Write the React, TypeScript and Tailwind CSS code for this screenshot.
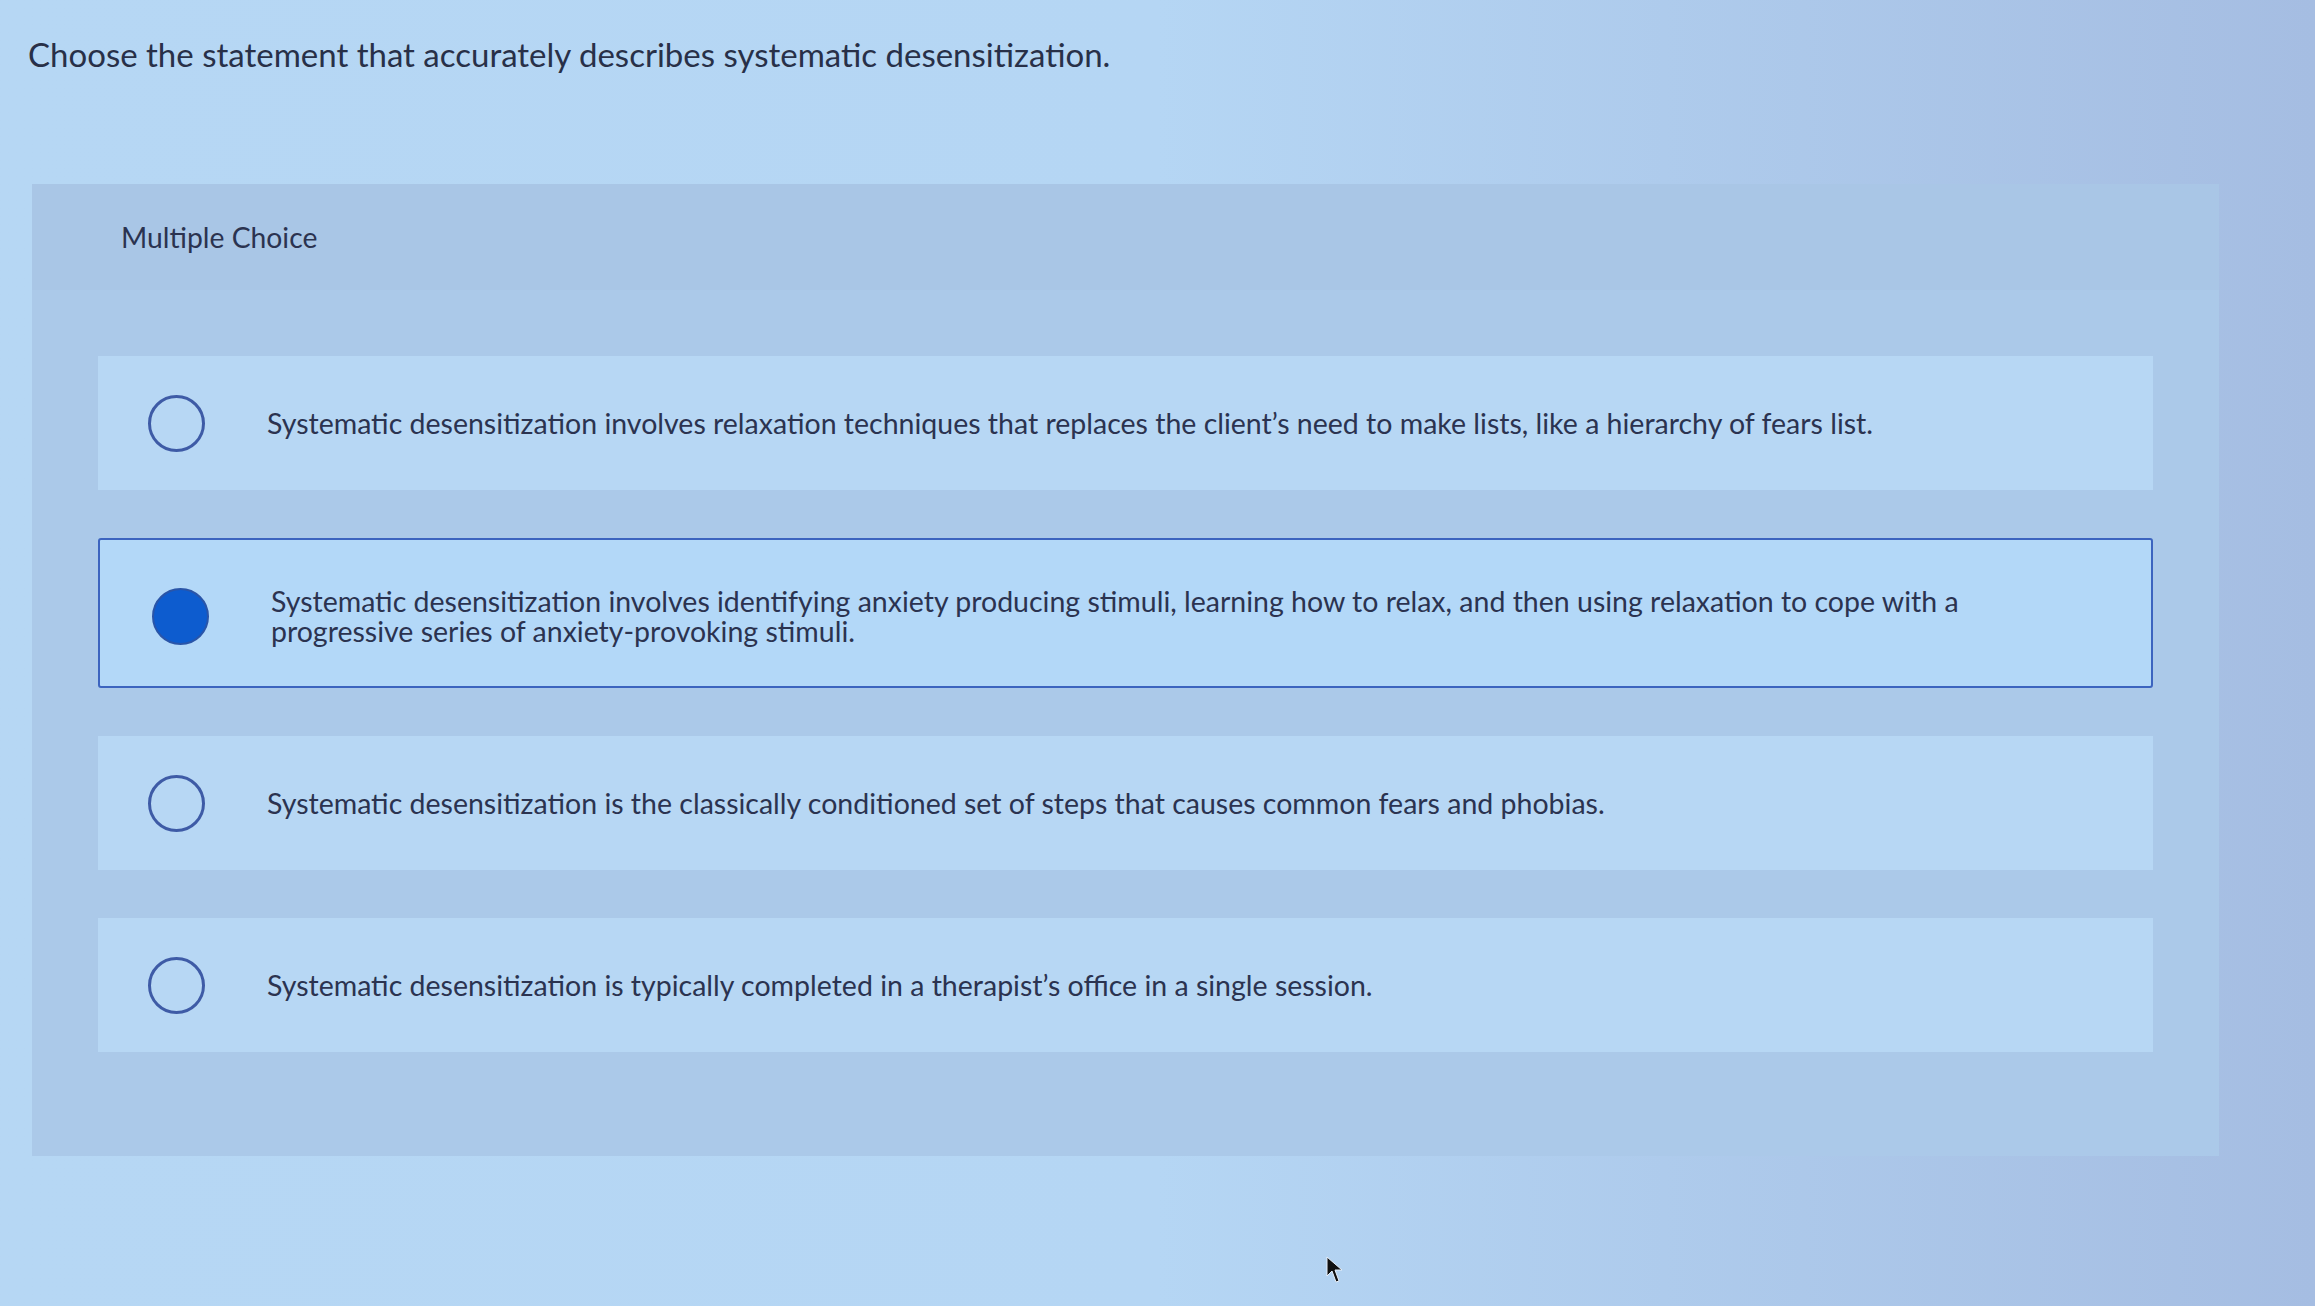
import React from "react";

type Choice = {
    text: string;
    selected?: boolean;
};

const choices: Choice[] = [
    {
        text: "Systematic desensitization involves relaxation techniques that replaces the client’s need to make lists, like a hierarchy of fears list.",
    },
    {
        text: "Systematic desensitization involves identifying anxiety producing stimuli, learning how to relax, and then using relaxation to cope with a progressive series of anxiety-provoking stimuli.",
        selected: true,
    },
    {
        text: "Systematic desensitization is the classically conditioned set of steps that causes common fears and phobias.",
    },
    {
        text: "Systematic desensitization is typically completed in a therapist’s office in a single session.",
    },
];

const Radio = ({ selected }: { selected?: boolean }) =>
    selected ? (
        <span className="block w-[57px] h-[57px] shrink-0 rounded-full bg-[#0d5ccf] border-2 border-[#2a55a8]" />
    ) : (
        <span className="block w-[57px] h-[57px] shrink-0 rounded-full border-[3px] border-[#3e5ba6]" />
    );

const ChoiceRow = ({ choice }: { choice: Choice }) => (
    <div
        className={
            choice.selected
                ? "flex items-center min-h-[150px] pl-[52px] pr-[40px] pt-[6px] bg-[#b3d8f8] border-2 border-[#3c64bf] rounded-[3px]"
                : "flex items-center min-h-[134px] pl-[50px] pr-[40px] bg-[#b7d7f4]"
        }
    >
        <Radio selected={choice.selected} />
        <p className="ml-[62px] max-w-[1740px] text-[28.5px] leading-[30px] text-[#2b3350]">{choice.text}</p>
    </div>
);

export default function App() {
    return (
        <div
            className="relative w-full h-[1306px] overflow-hidden bg-gradient-to-r from-[#b6d7f4] via-[#b5d6f4] to-[#a5bde2] text-[#2b3350]"
            style={{ fontFamily: "Lato, 'Open Sans', Arial, sans-serif" }}
        >
            <h1 className="pt-[34px] pl-[28px] text-[33px] leading-[40px] font-normal text-[#283048]">
                Choose the statement that accurately describes systematic desensitization.
            </h1>

            <div className="mt-[110px] ml-[32px] w-[2187px] bg-[#abc9e9] pb-[104px]">
                <div className="h-[106px] flex items-center pl-[89px] bg-[#a9c6e6] text-[28.3px]">
                    Multiple Choice
                </div>
                <div className="flex flex-col gap-[48px] mt-[66px] mx-[66px]">
                    {choices.map((c, i) => (
                        <ChoiceRow key={i} choice={c} />
                    ))}
                </div>
            </div>

            {/* mouse pointer */}
            <svg
                className="absolute left-[1326px] top-[1256px]"
                width="18"
                height="28"
                viewBox="0 0 18 28"
            >
                <path d="M1 1 L1 20 L6 15 L10 26 L13 25 L9 14 L16 14 Z" fill="#111" stroke="#e8f0fa" strokeWidth="1" />
            </svg>
        </div>
    );
}
